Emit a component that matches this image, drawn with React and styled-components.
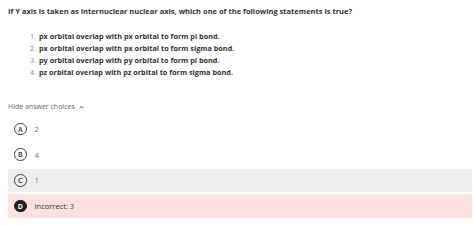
import React from "react";
import styled, { createGlobalStyle } from "styled-components";

const GlobalStyle = createGlobalStyle`
  body {
    margin: 0;
    background: #ffffff;
    font-family: "Open Sans", "Liberation Sans", sans-serif;
    color: #333333;
  }
`;

const Page = styled.div`
  width: 474px;
  height: 225px;
  padding: 6px 2px 0 8px;
  box-sizing: border-box;
`;

const Question = styled.p`
  margin: 0;
  font-size: 7.5px;
  font-weight: 700;
  line-height: 11px;
  color: #333333;
`;

const Statements = styled.ol`
  margin: 12.5px 0 0 0;
  padding: 0 0 0 22px;
  list-style: none;
  counter-reset: stmt;
`;

const Statement = styled.li`
  counter-increment: stmt;
  font-size: 7.3px;
  font-weight: 700;
  line-height: 12.1px;
  color: #333333;

  &::before {
    content: counter(stmt) ".";
    display: inline-block;
    width: 9px;
    font-weight: 400;
    color: #8a8a8a;
  }
`;

const Toggle = styled.div`
  display: flex;
  align-items: center;
  gap: 4px;
  margin-top: 24px;
  font-size: 7px;
  line-height: 10px;
  color: #666666;
`;

const Choices = styled.div`
  display: flex;
  flex-direction: column;
  gap: 2.4px;
  margin-top: 5.5px;
`;

const Choice = styled.div`
  display: flex;
  align-items: center;
  gap: 8px;
  height: 23.3px;
  padding-left: 6px;
  background: ${(p) =>
    p.$state === "selected" ? "#eeeeee" : p.$state === "wrong" ? "#fde0e0" : "transparent"};
  font-size: 7.5px;
  color: ${(p) => (p.$state === "wrong" ? "#333333" : "#777777")};
`;

const Badge = styled.span`
  display: flex;
  align-items: center;
  justify-content: center;
  width: 12.5px;
  height: 12.5px;
  border-radius: 50%;
  box-sizing: border-box;
  border: 1px solid ${(p) => (p.$filled ? "#222222" : "#444444")};
  background: ${(p) => (p.$filled ? "#222222" : "transparent")};
  color: ${(p) => (p.$filled ? "#ffffff" : "#333333")};
  font-size: 7px;
  font-weight: ${(p) => (p.$filled ? 700 : 600)};
`;

const Caret = () => (
  <svg width="5" height="4" viewBox="0 0 5 4">
    <path d="M0.7 3.2 L2.5 1.2 L4.3 3.2" fill="none" stroke="#555" strokeWidth="1" />
  </svg>
);

const statements = [
  "px orbital overlap with px orbital to form pi bond.",
  "px orbital overlap with px orbital to form sigma bond.",
  "py orbital overlap with py orbital to form pi bond.",
  "pz orbital overlap with pz orbital to form sigma bond.",
];

const choices = [
  { letter: "A", text: "2" },
  { letter: "B", text: "4" },
  { letter: "C", text: "1", state: "selected" },
  { letter: "D", text: "Incorrect: 3", state: "wrong" },
];

export default function App() {
  return (
    <>
      <GlobalStyle />
      <Page>
        <Question>
          If Y axis is taken as internuclear nuclear axis, which one of the following statements is true?
        </Question>
        <Statements>
          {statements.map((s) => (
            <Statement key={s}>{s}</Statement>
          ))}
        </Statements>
        <Toggle>
          Hide answer choices <Caret />
        </Toggle>
        <Choices>
          {choices.map((c) => (
            <Choice key={c.letter} $state={c.state}>
              <Badge $filled={c.state === "wrong"}>{c.letter}</Badge>
              {c.text}
            </Choice>
          ))}
        </Choices>
      </Page>
    </>
  );
}
